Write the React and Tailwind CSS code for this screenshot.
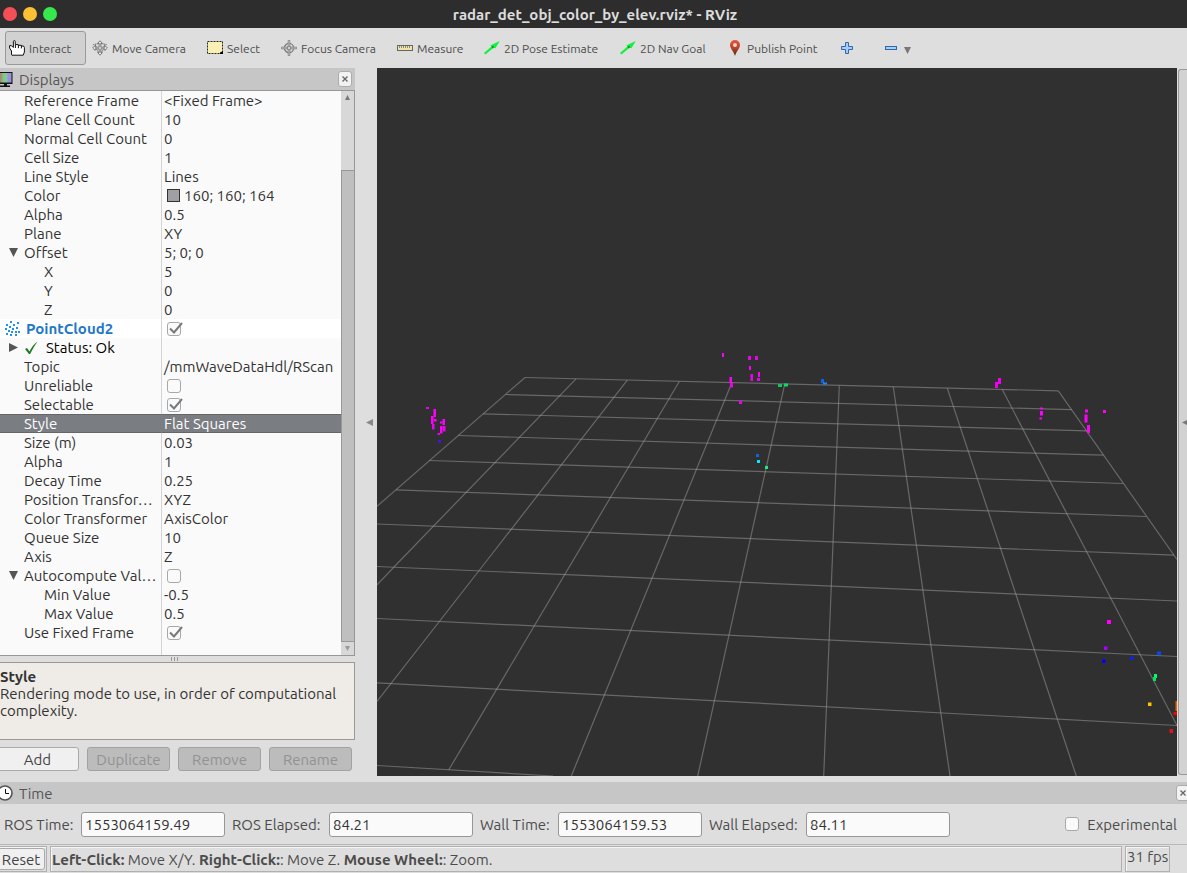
import React, { useState } from 'react';
import clsx from 'clsx';

const tools = [
  { label: 'Interact', icon: HandIcon, width: 'w-[81px]', active: true },
  { label: 'Move Camera', icon: MoveIcon, width: 'w-[113px]' },
  { label: 'Select', icon: SelectIcon, width: 'w-[72px]' },
  { label: 'Focus Camera', icon: FocusIcon, width: 'w-[114px]' },
  { label: 'Measure', icon: RulerIcon, width: 'w-[85px]' },
  { label: '2D Pose Estimate', icon: ArrowIcon, width: 'w-[134px]' },
  { label: '2D Nav Goal', icon: ArrowIcon, width: 'w-[105px]' },
  { label: 'Publish Point', icon: PinIcon, width: 'w-[110px]' }
];

const rows = [
  { name: 'Reference Frame', value: '<Fixed Frame>' },
  { name: 'Plane Cell Count', value: '10' },
  { name: 'Normal Cell Count', value: '0' },
  { name: 'Cell Size', value: '1' },
  { name: 'Line Style', value: 'Lines' },
  { name: 'Color', value: '160; 160; 164', swatch: true },
  { name: 'Alpha', value: '0.5' },
  { name: 'Plane', value: 'XY' },
  { name: 'Offset', value: '5; 0; 0', arrow: 'down' },
  { name: 'X', value: '5', nested: true },
  { name: 'Y', value: '0', nested: true },
  { name: 'Z', value: '0', nested: true },
  { name: 'PointCloud2', checked: true, kind: 'display' },
  { name: 'Status: Ok', arrow: 'right', kind: 'status' },
  { name: 'Topic', value: '/mmWaveDataHdl/RScan' },
  { name: 'Unreliable', checked: false },
  { name: 'Selectable', checked: true },
  { name: 'Style', value: 'Flat Squares', selected: true },
  { name: 'Size (m)', value: '0.03' },
  { name: 'Alpha', value: '1' },
  { name: 'Decay Time', value: '0.25' },
  { name: 'Position Transfor…', value: 'XYZ' },
  { name: 'Color Transformer', value: 'AxisColor' },
  { name: 'Queue Size', value: '10' },
  { name: 'Axis', value: 'Z' },
  { name: 'Autocompute Val…', checked: false, arrow: 'down' },
  { name: 'Min Value', value: '-0.5', nested: true },
  { name: 'Max Value', value: '0.5', nested: true },
  { name: 'Use Fixed Frame', checked: true }
];

const times = [
  { id: 'ros-time', label: 'ROS Time:', value: '1553064159.49', width: 'w-[77px]' },
  { id: 'ros-elapsed', label: 'ROS Elapsed:', value: '84.21', width: 'w-[97px]' },
  { id: 'wall-time', label: 'Wall Time:', value: '1553064159.53', width: 'w-[78px]' },
  { id: 'wall-elapsed', label: 'Wall Elapsed:', value: '84.11', width: 'w-[97px]' }
];

// x, y pairs along each grid line
const gridLines = [
  [148, 309.5, 681.3, 322.8],
  [128.7, 326.5, 694.7, 341.7],
  [106.3, 345.8, 709.7, 362.8],
  [81.3, 367.5, 726.3, 387.2],
  [52.3, 392.5, 746, 415.5],
  [19, 421.8, 769, 448.5],
  [0, 456, 797, 487.2],
  [0, 498.5, 800, 533],
  [0, 550.5, 800, 588.5],
  [0, 614.8, 800, 657.5],
  [0, 697.5, 176, 708],
  [148, 309.5, 0, 438.2],
  [199, 310.8, 23.7, 492, 0, 516.8],
  [250.3, 312.2, 110.3, 492, 0, 633.5],
  [302.3, 313.5, 71.7, 702],
  [354.7, 315, 194.3, 708],
  [407.7, 316.2, 320.7, 708],
  [462.3, 317.5, 446.7, 708],
  [516.3, 319, 573, 708],
  [570.3, 320.2, 699.3, 708],
  [625.3, 321.5, 800, 657.5],
  [681.3, 322.8, 800, 491.5]
];

// x, y, width, height, color
const points = [
  [345, 285, 2, 4, '#ff00ff'],
  [371, 288, 3, 4, '#e605e6'],
  [378, 288, 3, 4, '#e605e6'],
  [372, 298, 2, 4, '#ff00ff'],
  [373.5, 306, 2.5, 7, '#f000f0'],
  [381, 304, 2, 5, '#ff00ff'],
  [380, 310, 3, 3, '#e605e6'],
  [352.5, 309, 2.5, 6, '#ff00ff'],
  [353, 315, 3, 4.5, '#e605e6'],
  [362, 332.5, 3, 3.5, '#f000f0'],
  [49, 339, 3, 2, '#e605e6'],
  [56.5, 341, 2.5, 8, '#ff00ff'],
  [54, 348, 2.5, 8, '#ff00ff'],
  [57, 351, 2.5, 2.5, '#ff00ff'],
  [55, 356, 2.5, 5.5, '#f000f0'],
  [65.5, 351, 2.5, 6, '#ff00ff'],
  [63, 353.5, 2.5, 2, '#ff00ff'],
  [63, 358, 2.5, 7.5, '#ff00ff'],
  [66, 358, 2.5, 5.5, '#f000f0'],
  [60.5, 365, 2.5, 2, '#f000f0'],
  [61, 372, 3, 3, '#4a10e0'],
  [379, 386, 3, 3, '#1565d8'],
  [380, 392, 3, 3, '#00eaff'],
  [388, 398, 3, 3, '#14f07c'],
  [401, 316, 4, 3, '#12c45c'],
  [407, 315.5, 4, 3, '#12d862'],
  [444, 311, 3, 4, '#0a64f0'],
  [446, 314.5, 4, 2, '#1e88ff'],
  [621, 310, 3, 6, '#f000f0'],
  [618, 314, 3, 6, '#f000f0'],
  [663, 339.5, 3, 2, '#ff00ff'],
  [663, 343, 3, 4.5, '#ff00ff'],
  [662.5, 349.5, 2.5, 2, '#ff00ff'],
  [708, 341.5, 3, 3, '#ff00ff'],
  [707.5, 346.5, 3, 8, '#ff00ff'],
  [710, 357, 3, 8, '#ff00ff'],
  [726, 342, 3, 3, '#ff00ff'],
  [730, 552, 4, 4, '#ff00ff'],
  [727, 578.5, 3.5, 3.5, '#a800ff'],
  [725, 591.5, 3.5, 3.5, '#0000ff'],
  [753, 588.5, 3.5, 3.5, '#0a24f0'],
  [780, 583.5, 4, 3.5, '#0048ff'],
  [777, 606, 3, 4, '#00ff66'],
  [776, 609, 3, 4, '#00e85c'],
  [771, 634.5, 3.5, 3.5, '#ffc400'],
  [798.5, 633, 1.5, 10, '#ff5a00'],
  [796.5, 644, 3.5, 3, '#ff0000'],
  [792.5, 661, 3.5, 4, '#e81010']
];

function HandIcon() {
  return (
    <svg viewBox="0 0 16 16" className="size-4 shrink-0" fill="#fff" stroke="#111" strokeLinejoin="round">
      <path d="M2.5 14.8 V11 L.6 8 V5.6 H2.2 L4.4 7.4 V1.5 Q4.4.6 5.3.6 Q6.3.6 6.3 1.5 V4.6 H9.3 V5.3 H12.3 V6 H14 Q15.4 6.2 15.4 7.5 V12 L14.2 15.2 H2.9 Z" />
      <path d="M6.4 4.6 V8 M9.4 5 V8.2 M12.4 5.8 V8.4" fill="none" />
    </svg>
  );
}

function MoveIcon() {
  return (
    <svg viewBox="0 0 16 16" className="size-4 shrink-0" fill="#eee" stroke="#4a4a4a" strokeLinejoin="round">
      <path d="M.8 4.8 Q8 2.6 15.2 4.8 M3.4 4.4 L5 10.6 L8 12.6 L11 10.6 L12.6 4.4" fill="none" strokeWidth=".7" strokeDasharray="1.5 .6" />
      <path d="M8 .8 L10.4 3.4 H8.8 V7.2 H12.8 V5.4 L15.4 8 L12.8 10.4 V8.8 H8.8 V12.6 H10.4 L8 15.2 L5.6 12.6 H7.2 V8.8 H3.2 V10.4 L.6 8 L3.2 5.4 V7.2 H7.2 V3.4 H5.6 Z" strokeWidth=".7" />
    </svg>
  );
}

function SelectIcon() {
  return (
    <svg viewBox="0 0 16 16" className="size-4 shrink-0">
      <rect x=".5" y="1.5" width="15" height="12" fill="#faf0b4" stroke="#222" strokeDasharray="2 1" />
      <path d="M16 11 V14 H13 V12.5 Z" fill="#000" />
    </svg>
  );
}

function FocusIcon() {
  return (
    <svg viewBox="0 0 16 16" className="size-4 shrink-0" fill="none" stroke="#777">
      <circle cx="8" cy="8" r="4.6" strokeWidth="1.2" />
      <circle cx="8" cy="8" r="2" strokeWidth=".8" />
      <path d="M7.2 .4 H8.8 V6.6 H7.2 Z M7.2 9.4 H8.8 V15.6 H7.2 Z M.4 7.2 H6.6 V8.8 H.4 Z M9.4 7.2 H15.6 V8.8 H9.4 Z" fill="#ddd" strokeWidth=".8" />
    </svg>
  );
}

function RulerIcon() {
  return (
    <svg viewBox="0 0 16 16" className="size-4 shrink-0" stroke="#666" fill="#efe2a6">
      <rect x=".5" y="5.5" width="15" height="5" />
      <path d="M2.5 6 V8 M4.5 6 V8 M6.5 6 V8 M8.5 6 V8 M10.5 6 V8 M12.5 6 V8" strokeWidth=".7" />
    </svg>
  );
}

function ArrowIcon() {
  return (
    <svg viewBox="0 0 16 16" className="size-4 shrink-0">
      <path d="M15.8 1 L11.4 8.2 L9.6 7.8 L1.4 14.4 L0 13 L7.4 6.4 L6.6 5.2 Z" fill="#12f23c" />
      <path d="M7.4 6.4 L10 6.2 L9 8.4 Z" fill="#0c7a24" />
    </svg>
  );
}

function PinIcon() {
  return (
    <svg viewBox="0 0 16 16" className="size-4 shrink-0">
      <defs>
        <linearGradient id="pin" x1="0" y1="0" x2="0" y2="1">
          <stop offset="0" stopColor="#e8553a" />
          <stop offset=".5" stopColor="#b8442a" />
          <stop offset="1" stopColor="#4a2a10" />
        </linearGradient>
      </defs>
      <path d="M8 0 A5 5 0 0 1 13 5 C13 8.6 9.4 11 8 16 C6.6 11 3 8.6 3 5 A5 5 0 0 1 8 0 Z" fill="url(#pin)" />
      <circle cx="8" cy="5" r="2" fill="#f3d4cc" />
    </svg>
  );
}

function PlusIcon() {
  return (
    <svg viewBox="0 0 16 16" className="size-4 shrink-0">
      <path d="M6.5 2.5 H9.5 V6.5 H13.5 V9.5 H9.5 V13.5 H6.5 V9.5 H2.5 V6.5 H6.5 Z" fill="#a9cdf2" stroke="#2f66b0" />
    </svg>
  );
}

function MinusIcon() {
  return (
    <svg viewBox="0 0 16 16" className="size-4 shrink-0">
      <rect x="2.5" y="6.5" width="11" height="3" fill="#a9cdf2" stroke="#2f66b0" />
    </svg>
  );
}

function MonitorIcon() {
  return (
    <svg viewBox="0 0 14 17" className="h-[17px] w-[14px] shrink-0">
      <defs>
        <linearGradient id="screen">
          <stop offset="0" stopColor="#b86868" />
          <stop offset=".35" stopColor="#80c880" />
          <stop offset=".6" stopColor="#80c8a0" />
          <stop offset=".75" stopColor="#9a90e0" />
        </linearGradient>
      </defs>
      <rect x="-2" y="1" width="14.5" height="12" fill="#111" />
      <rect x="-1" y="2" width="12.5" height="9.5" fill="url(#screen)" />
      <path d="M4 13 H7 V14.5 H10 V16 H0 V14.5 H4 Z" fill="#111" />
    </svg>
  );
}

function ClockIcon() {
  return (
    <svg viewBox="0 0 14 16" className="h-4 w-[14px] shrink-0">
      <circle cx="5" cy="8" r="7" fill="#fff" stroke="#555" strokeWidth="1.6" />
      <path d="M5.5 4 V8.5 H9" fill="none" stroke="#111" />
    </svg>
  );
}

function CloudIcon() {
  return (
    <svg viewBox="0 0 15 15" className="size-[15px] shrink-0" fill="#1e90f0">
      <path d="M5 0h2v2H5z M12 1h2v2h-2z M1 3h2v2H1z M8 3h2v2H8z M4 5h2v2H4z M11 6h2v2h-2z M0 7h2v2H0z M7 7h2v2H7z M3 9h2v2H3z M10 10h2v2h-2z M13 10h2v2h-2z M6 10h2v2H6z M1 12h2v2H1z M5 13h2v2H5z M10 13h2v2h-2z" />
    </svg>
  );
}

function Triangle({ direction, className }) {
  return (
    <svg viewBox="0 0 10 10" className={clsx('shrink-0', className)} fill="currentColor">
      {direction === 'down' && <path d="M0 0 H10 L5 10 Z" />}
      {direction === 'up' && <path d="M0 10 H10 L5 0 Z" />}
      {direction === 'left' && <path d="M10 0 V10 L0 5 Z" />}
      {direction === 'right' && <path d="M0 0 V10 L10 5 Z" />}
    </svg>
  );
}

function Checkbox({ id, label, defaultChecked }) {
  const [checked, setChecked] = useState(defaultChecked);

  return (
    <span className="relative block size-[14px] shrink-0">
      <input
        id={id}
        type="checkbox"
        aria-label={label}
        checked={checked}
        onChange={(e) => setChecked(e.target.checked)}
        className="block size-[14px] appearance-none rounded-[3px] border border-[#a8a8a8] bg-[#fafafa]"
      />
      {checked && (
        <svg viewBox="0 0 16 14" className="pointer-events-none absolute top-0 left-0 h-[14px] w-4">
          <path d="M3 6.5 L7 10.5 L15 1" fill="none" stroke="#777a7d" strokeWidth="2" />
        </svg>
      )}
    </span>
  );
}

function CloseButton({ label }) {
  return (
    <button
      type="button"
      aria-label={label}
      className="flex h-4 w-[14px] shrink-0 items-center justify-center rounded-[3px] border border-[#acacac] bg-[#f2f2f2]"
    >
      <svg viewBox="0 0 6 6" className="size-[6px]" stroke="#666" strokeWidth="1.3">
        <path d="M.5 .5 L5.5 5.5 M5.5 .5 L.5 5.5" />
      </svg>
    </button>
  );
}

function PropertyRow({ row }) {
  const isDisplay = row.kind === 'display';
  const isStatus = row.kind === 'status';

  return (
    <tr
      className={clsx(
        isDisplay && 'bg-white',
        row.selected && 'bg-[#7a7d82] text-white shadow-[inset_0_1px_0_#666,inset_0_-1px_0_#666]'
      )}
    >
      <td className="p-0">
        <div
          className={clsx(
            'flex h-[19px] items-center whitespace-nowrap',
            row.nested && 'pl-[44px]',
            !row.nested && !row.arrow && !isDisplay && 'pl-6',
            row.arrow && 'gap-[6px] pl-[9px]',
            isDisplay && 'gap-[6px] pl-[5px] font-bold text-[#2277c8]',
            isStatus && 'text-black'
          )}
        >
          {isDisplay && <CloudIcon />}
          {row.arrow && <Triangle direction={row.arrow} className="size-[9px] text-[#555]" />}
          {isStatus && (
            <svg viewBox="0 0 16 14" className="h-[14px] w-4 shrink-0">
              <path d="M1 8 L3 7 L5.5 10.5 Q8.5 4 13.5 .4 Q9.5 6 6.1 13 H4.9 Z" fill="#1f7a26" />
            </svg>
          )}
          {row.name}
        </div>
      </td>
      <td className={clsx('border-l p-0', row.selected ? 'border-[#7a7d82]' : 'border-[#d4d4d4]')}>
        <div className="flex h-[19px] items-center overflow-hidden pl-[2px] whitespace-nowrap">
          {row.swatch && <span className="mr-1 ml-[3px] block size-[13px] border border-[#333] bg-[#a0a0a4]" />}
          {row.checked !== undefined && (
            <div className="pl-[3px]">
              <Checkbox label={row.name} defaultChecked={row.checked} />
            </div>
          )}
          {row.value}
        </div>
      </td>
    </tr>
  );
}

function Displays() {
  return (
    <aside className="flex w-[355px] shrink-0 flex-col">
      <div className="flex h-[22px] items-center bg-[#c6c6c6] pr-[3px] text-[#555]">
        <MonitorIcon />
        <h2 className="flex-1 pl-[5px]">Displays</h2>
        <CloseButton label="Close Displays" />
      </div>

      <div className="flex flex-1 border-y border-r border-[#979797] bg-[#fafafa]">
        <table className="min-w-0 flex-1 table-fixed border-separate border-spacing-0 self-start text-[#333]">
          <colgroup>
            <col className="w-[161px]" />
            <col />
          </colgroup>
          <tbody>
            {rows.map((row, i) => (
              <PropertyRow key={i} row={row} />
            ))}
            <tr className="h-[13px]">
              <td className="p-0" />
              <td className="border-l border-[#d4d4d4] p-0" />
            </tr>
          </tbody>
        </table>
        <div className="flex w-[13px] flex-col items-center bg-[#d8d8d8]">
          <div className="flex h-[79px] w-full justify-center pt-1">
            <Triangle direction="up" className="size-[5px] text-[#777]" />
          </div>
          <div className="w-full flex-1 border border-r-0 border-[#989898] bg-[#bfbfbf]" />
          <div className="flex h-[13px] items-center">
            <Triangle direction="down" className="size-[5px] text-[#999]" />
          </div>
        </div>
      </div>

      <div className="flex h-[6px] items-center justify-center gap-[2px] pr-[6px]">
        <span className="h-1 w-px bg-[#999]" />
        <span className="h-1 w-px bg-[#999]" />
        <span className="h-1 w-px bg-[#999]" />
      </div>

      <div className="h-[78px] border-y border-r border-[#999] bg-[#efebe7] pt-[5px] leading-[17px] text-[#333]">
        <h3 className="font-bold">Style</h3>
        <p>Rendering mode to use, in order of computational complexity.</p>
      </div>

      <div className="-ml-1 flex gap-2 pt-[7px] pr-[3px] pb-[5px]">
        <button type="button" className="h-6 flex-1 rounded-[3px] border border-[#aaa] bg-[#f0f0f0] text-[#444]">
          Add
        </button>
        {['Duplicate', 'Remove', 'Rename'].map((label) => (
          <button
            key={label}
            type="button"
            disabled
            className="h-6 flex-1 rounded-[3px] border border-[#a2a2a2] bg-[#bcbcbc] text-[#929292]"
          >
            {label}
          </button>
        ))}
      </div>
    </aside>
  );
}

function Viewport() {
  return (
    <div className="min-w-0 flex-1 bg-[#303030]">
      <svg viewBox="0 0 800 708" preserveAspectRatio="xMidYMid slice" className="block h-full w-full">
        <g fill="none" stroke="#a0a0a4" strokeOpacity=".5" strokeWidth="1.2">
          {gridLines.map((line, i) => (
            <polyline key={i} points={line.join(' ')} />
          ))}
        </g>
        <g>
          {points.map(([x, y, width, height, color], i) => (
            <rect key={i} x={x} y={y} width={width} height={height} fill={color} />
          ))}
        </g>
      </svg>
    </div>
  );
}

export default function App() {
  return (
    <div className="flex min-h-screen w-full flex-col overflow-hidden bg-[#dedede] font-['Ubuntu','Noto_Sans',sans-serif] text-[15px] leading-[19px] text-[#4c4c4c]">
      <header className="flex h-7 items-center bg-[#2d2d2d]">
        <div className="flex flex-1 gap-[6px] pl-[3px]">
          <button type="button" aria-label="Close" className="size-[14px] rounded-full bg-[#f54e56]" />
          <button type="button" aria-label="Minimize" className="size-[14px] rounded-full bg-[#fcc133]" />
          <button type="button" aria-label="Maximize" className="size-[14px] rounded-full bg-[#36e84b]" />
        </div>
        <h1 className="font-bold text-[#dcdcdc]">radar_det_obj_color_by_elev.rviz* - RViz</h1>
        <div className="flex-1" />
      </header>

      <nav className="flex h-10 items-center gap-[2px] pl-[5px] text-[12px]">
        {tools.map(({ label, icon: Icon, width, active }) => (
          <button
            key={label}
            type="button"
            className={clsx(
              'flex h-[34px] items-center gap-1 rounded-[3px] border pl-[3px] whitespace-nowrap',
              width,
              active ? 'border-[#9a9a9a] bg-[#d1d1d1]' : 'border-transparent'
            )}
          >
            <Icon />
            {label}
          </button>
        ))}
        <button type="button" aria-label="Add tool" className="flex h-[34px] w-[42px] items-center pl-1">
          <PlusIcon />
        </button>
        <button type="button" aria-label="Remove tool" className="flex h-[34px] items-center gap-[5px] pl-1">
          <MinusIcon />
          <Triangle direction="down" className="mt-1 size-[7px] text-[#777]" />
        </button>
      </nav>

      <main className="flex flex-1 pb-[6px]">
        <Displays />
        <div className="flex w-[22px] shrink-0 items-center justify-center pl-[7px]">
          <Triangle direction="left" className="size-[7px] text-[#888]" />
        </div>
        <Viewport />
        <div className="flex w-[10px] shrink-0 py-[1px] pl-[1px]">
          <div className="flex flex-1 items-center justify-end rounded-l-[3px] border border-r-0 border-[#999] bg-[#d2d2d2]">
            <Triangle direction="left" className="size-[5px] text-[#777]" />
          </div>
        </div>
      </main>

      <section>
        <div className="-mr-[3px] flex h-[22px] items-center bg-[#c6c6c6] text-[#555]">
          <ClockIcon />
          <h2 className="flex-1 pl-[5px]">Time</h2>
          <CloseButton label="Close Time" />
        </div>
        <div className="flex h-10 items-center gap-[7px] pr-[10px] pl-1">
          {times.map(({ id, label, value, width }) => (
            <div key={id} className="flex items-center">
              <label htmlFor={id} className={clsx('whitespace-nowrap', width)}>
                {label}
              </label>
              <input
                id={id}
                type="text"
                readOnly
                value={value}
                className="h-[25px] w-36 rounded-[3px] border border-[#979797] bg-[#fafafa] px-[3px] text-[#333]"
              />
            </div>
          ))}
          <div className="ml-auto flex items-center gap-2">
            <Checkbox id="experimental" defaultChecked={false} />
            <label htmlFor="experimental">Experimental</label>
          </div>
        </div>
      </section>

      <footer className="-ml-1 flex h-[29px] gap-[3px] border-t border-[#b8b8b8] py-[1px]">
        <div className="flex w-[51px] items-center border border-[#b0b0b0] pr-[1px] shadow-[inset_1px_1px_0_#f5f5f5]">
          <button type="button" className="h-[22px] flex-1 rounded-[3px] border border-[#aaa] bg-[#f0f0f0] text-[#444]">
            Reset
          </button>
        </div>
        <p className="flex flex-1 items-center border border-[#b0b0b0] pl-[1px] whitespace-pre shadow-[inset_1px_1px_0_#f5f5f5]">
          <b>Left-Click:</b> Move X/Y. <b>Right-Click:</b>: Move Z. <b>Mouse Wheel:</b>: Zoom.
        </p>
        <p className="w-[45px] border border-[#b0b0b0] pl-[1px] whitespace-nowrap shadow-[inset_1px_1px_0_#f5f5f5]">31 fps</p>
        <div className="w-[14px]" />
      </footer>
    </div>
  );
}
